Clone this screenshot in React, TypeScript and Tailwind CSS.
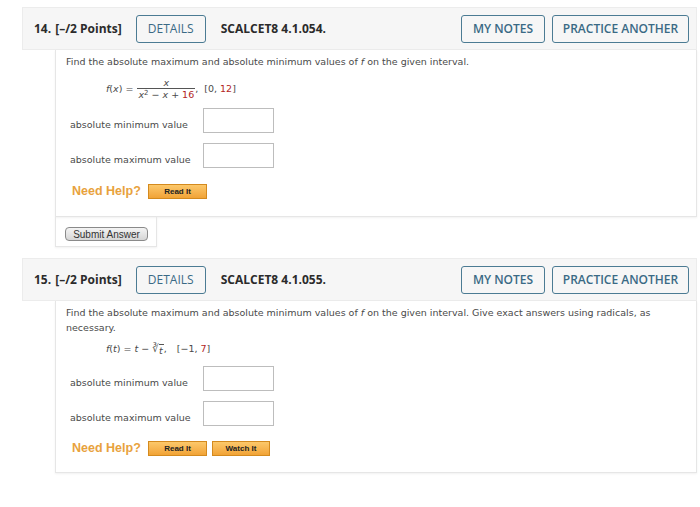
import React from 'react';

const Red = ({ children }: { children: React.ReactNode }) => (
  <span className="text-[#b3261e]">{children}</span>
);

const HelpButton = ({ label, width }: { label: string; width: string }) => (
  <span
    className={`inline-flex h-[15px] ${width} items-center justify-center border border-[#d48a1e] bg-gradient-to-b from-[#fcc86a] to-[#f1a335] font-['Liberation_Sans',Arial,sans-serif] text-[8px] font-bold text-[#222]`}
  >
    {label}
  </span>
);

const AnswerRow = ({ label }: { label: string }) => (
  <div className="flex items-end">
    <span className="mb-[1px] w-[137px] pl-[4px] leading-[14px]">{label}</span>
    <span className="h-[25px] w-[71px] border border-[#bdbdbd] bg-white" />
  </div>
);

const Header = ({ num, code }: { num: string; code: string }) => (
  <div className="flex h-[43px] items-center border border-[#ececec] bg-[#f6f6f6] pl-[11px] pr-[7px] font-['Open_Sans',sans-serif] text-[12px] text-[#2b2b2b]">
    <span className="font-bold">{num}.</span>
    <span className="ml-[4px] font-bold">[–/2 Points]</span>
    <span className="ml-[14px] flex h-[28px] w-[70px] items-center justify-center rounded-[3px] border-[1.5px] border-[#4b7b93] text-[#3a6a85]">
      DETAILS
    </span>
    <span className="ml-[15px] font-bold">{code}</span>
    <div className="ml-auto flex gap-[7px] font-semibold text-[#3a6a85]">
      <span className="flex h-[28px] w-[84px] items-center justify-center rounded-[3px] border-[1.5px] border-[#4b7b93]">
        MY NOTES
      </span>
      <span className="flex h-[28px] w-[137px] items-center justify-center rounded-[3px] border-[1.5px] border-[#4b7b93]">
        PRACTICE ANOTHER
      </span>
    </div>
  </div>
);

const NeedHelp = ({ watch }: { watch?: boolean }) => (
  <div className="flex items-center pl-[6px]">
    <span className="w-[76px] font-['Liberation_Sans',Arial,sans-serif] text-[12.5px] font-bold leading-[15px] text-[#e8a23d]">
      Need Help?
    </span>
    <HelpButton label="Read It" width="w-[59px]" />
    {watch && (
      <span className="ml-[5px] flex">
        <HelpButton label="Watch It" width="w-[58px]" />
      </span>
    )}
  </div>
);

export default function App() {
  return (
    <div className="h-[507px] w-[700px] bg-white pl-[22px] pr-[3px] pt-[7px] font-['DejaVu_Sans',Verdana,sans-serif] text-[9.5px] text-[#4a4a4a]">
      {/* Question 14 */}
      <Header num="14" code="SCALCET8 4.1.054." />
      <div className="ml-[33px] border-x border-b border-[#e6e6e6] shadow-[0_1px_2px_rgba(0,0,0,0.06)]">
        <div className="px-[10px] pb-[17px] pt-[4px]">
          <p className="leading-[15px]">
            Find the absolute maximum and absolute minimum values of <i>f</i> on the given interval.
          </p>
          <div className="ml-[40px] mt-[7px] flex h-[26px] items-center">
            <span><i>f</i>(<i>x</i>) =</span>
            <span className="ml-[4px] inline-flex flex-col items-center">
              <i className="leading-[11px]">x</i>
              <span className="border-t border-[#555] px-[1px] leading-[12px]">
                <i>x</i><sup className="text-[7px]">2</sup> − <i>x</i> + <Red>16</Red>
              </span>
            </span>
            <span>,</span>
            <span className="ml-[6px]">[0, <Red>12</Red>]</span>
          </div>
          <div className="mt-[6px] flex flex-col gap-[10px]">
            <AnswerRow label="absolute minimum value" />
            <AnswerRow label="absolute maximum value" />
          </div>
          <div className="mt-[16px]">
            <NeedHelp />
          </div>
        </div>
      </div>
      <div className="ml-[33px] w-[102px] border-x border-b border-[#e6e6e6] px-[9px] pb-[5px] pt-[10px] shadow-[0_1px_2px_rgba(0,0,0,0.06)]">
        <span className="flex h-[14px] w-[83px] items-center justify-center rounded-[4px] border border-[#8a8a8a] bg-gradient-to-b from-[#f4f4f4] to-[#d6d6d6] font-['Liberation_Sans',Arial,sans-serif] text-[10px] text-[#333]">
          Submit Answer
        </span>
      </div>

      {/* Question 15 */}
      <div className="mt-[11px]">
        <Header num="15" code="SCALCET8 4.1.055." />
      </div>
      <div className="ml-[33px] border-x border-b border-[#e6e6e6] shadow-[0_1px_2px_rgba(0,0,0,0.06)]">
        <div className="px-[10px] pb-[16px] pt-[4px]">
          <p className="w-[600px] leading-[15px]">
            Find the absolute maximum and absolute minimum values of <i>f</i> on the given interval. Give exact answers using radicals, as necessary.
          </p>
          <div className="ml-[40px] mt-[6px] flex h-[16px] items-center">
            <span><i>f</i>(<i>t</i>) = <i>t</i> − </span>
            <span className="ml-[3px] inline-flex items-center">
              <span className="text-[10.5px]">∛</span>
              <i className="mt-[1px] border-t border-[#555] pr-[1px] leading-[11px]">t</i>
            </span>
            <span>,</span>
            <span className="ml-[10px]">[−1, <Red>7</Red>]</span>
          </div>
          <div className="mt-[9px] flex flex-col gap-[10px]">
            <AnswerRow label="absolute minimum value" />
            <AnswerRow label="absolute maximum value" />
          </div>
          <div className="mt-[15px]">
            <NeedHelp watch />
          </div>
        </div>
      </div>
    </div>
  );
}
